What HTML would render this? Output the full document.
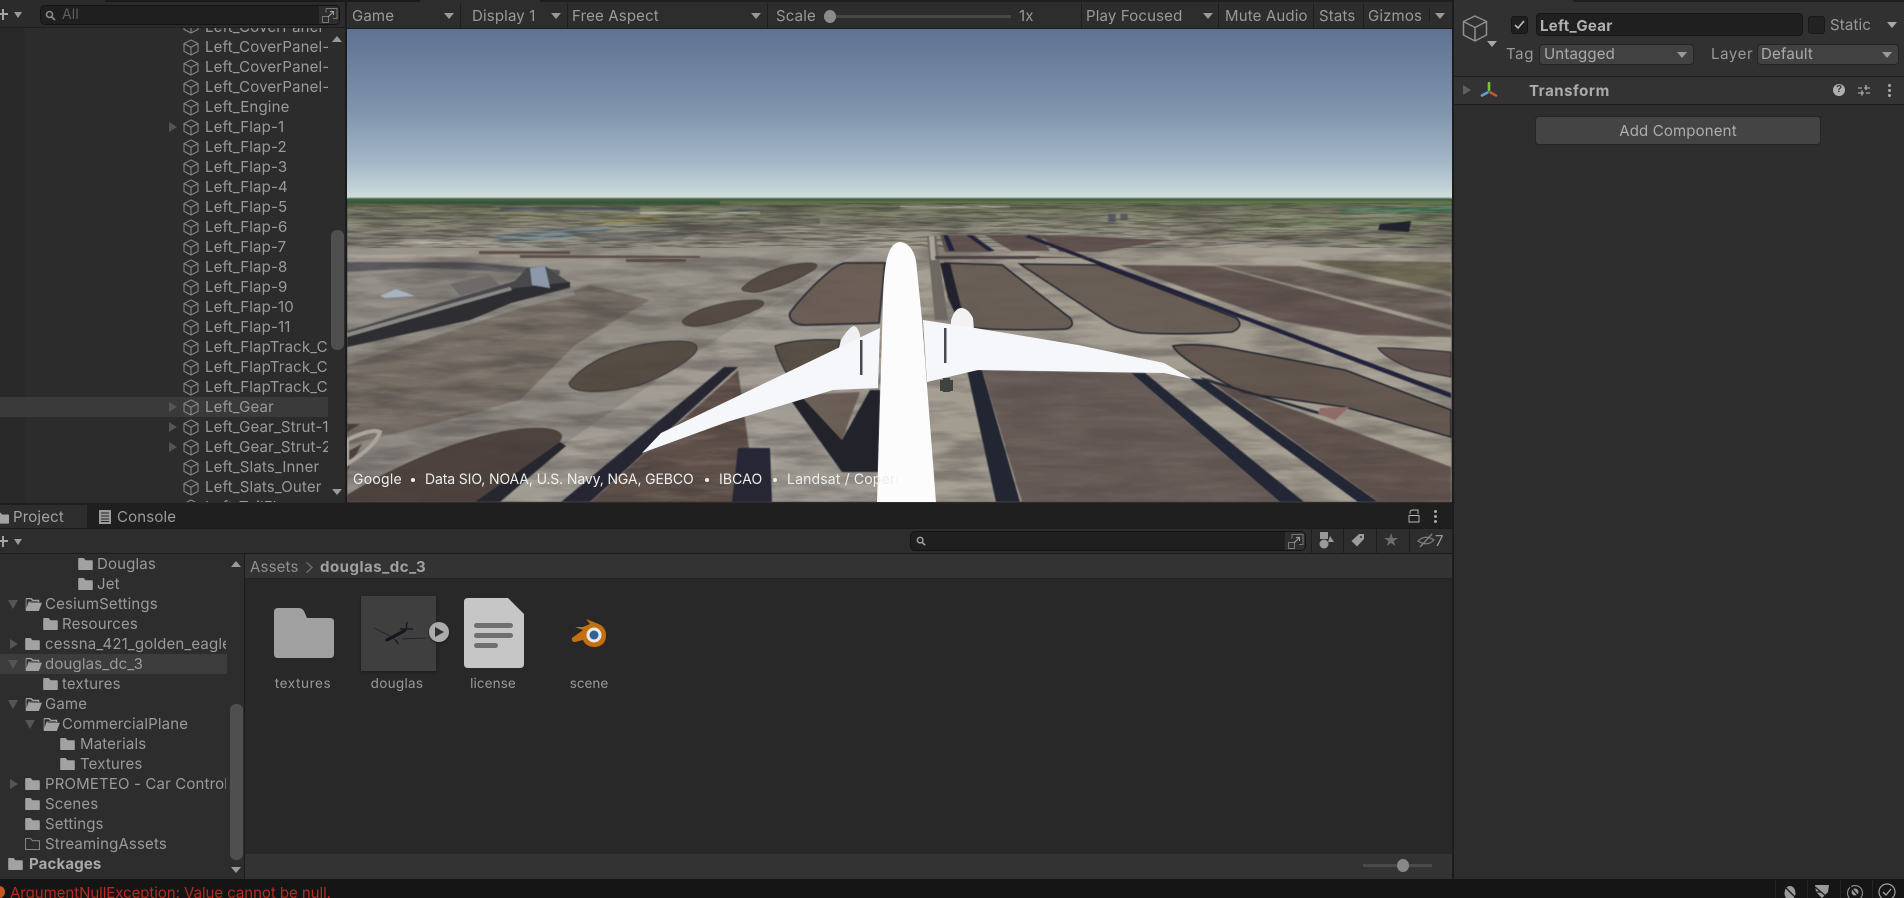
<!DOCTYPE html>
<html><head><meta charset="utf-8"><title>Unity</title>
<style>
html,body{margin:0;padding:0;width:1904px;height:898px;overflow:hidden;background:#2d2d2d}
body{position:relative;font-family:"Inter","Liberation Sans",sans-serif;font-size:15px;color:#9a9a9a;letter-spacing:.15px}
div,span,svg{position:absolute}
.t{white-space:nowrap;line-height:20px;height:20px}
.b{font-weight:bold}
.v{width:1px;background:#1e1e1e;top:3px;height:25px}
.ar{width:0;height:0;border-left:5px solid transparent;border-right:5px solid transparent;border-top:6px solid #9a9a9a}
.au{width:0;height:0;border-left:5px solid transparent;border-right:5px solid transparent;border-bottom:6px solid #9a9a9a}
.rt{width:0;height:0;border-top:5px solid transparent;border-bottom:5px solid transparent;border-left:8px solid #555}
.dn{width:0;height:0;border-left:5.5px solid transparent;border-right:5.5px solid transparent;border-top:9px solid #555}
.lb{font-size:13.5px;letter-spacing:.6px;text-align:center;width:90px;line-height:18px;color:#9a9a9a}
.ic{width:16px;height:17px;overflow:visible}
</style></head><body>
<svg width="0" height="0" style="position:absolute">
<defs>
<symbol id="c" viewBox="0 0 16 17"><path d="M8 1 L15 4.6 V12.4 L8 16 L1 12.4 V4.6 Z M1 4.6 L8 8.2 L15 4.6 M8 8.2 V16" fill="none" stroke="#858585" stroke-width="1.1" stroke-linejoin="round"/></symbol>
<symbol id="f" viewBox="0 0 16 13"><path d="M1 0 H6 L8 2.5 H15 Q16 2.5 16 3.5 V12 Q16 13 15 13 H1 Q0 13 0 12 V1 Q0 0 1 0 Z" fill="#a2a2a2"/></symbol>
<symbol id="o" viewBox="0 0 17 13"><path d="M1 0 H6 L8 2 H14 V4 H4.5 L1.5 11 M4.5 5 H16.5 L13.5 13 H1 L1 1 Z" fill="#a2a2a2" stroke="#a2a2a2" stroke-width=".6"/><path d="M1.5 1.2 V10 L3.6 3.6 H13 V3 H7.5 L5.5 1.2 Z" fill="#2d2d2d"/></symbol>
<filter id="bl"><feGaussianBlur stdDeviation="0.9"/></filter>
<filter id="bl2"><feGaussianBlur stdDeviation="0.6"/></filter>
<filter id="nz" x="0" y="0" width="100%" height="100%" color-interpolation-filters="sRGB"><feTurbulence type="fractalNoise" baseFrequency="0.012 0.07" numOctaves="4" seed="4"/><feColorMatrix values="0 0 0 0 .22  0 0 0 0 .2  0 0 0 0 .2  3.2 0 0 0 -1.3"/></filter>
<filter id="nz2" x="0" y="0" width="100%" height="100%" color-interpolation-filters="sRGB"><feTurbulence type="fractalNoise" baseFrequency="0.02 0.12" numOctaves="4" seed="11"/><feColorMatrix values="0 0 0 0 .85  0 0 0 0 .83  0 0 0 0 .8  3.2 0 0 0 -1.5"/></filter>
<filter id="nz3" x="0" y="0" width="100%" height="100%" color-interpolation-filters="sRGB"><feTurbulence type="fractalNoise" baseFrequency="0.03 0.4" numOctaves="3" seed="7"/><feColorMatrix values="0 0 0 0 .24  0 0 0 0 .26  0 0 0 0 .2  4 0 0 0 -1.7"/></filter>
<linearGradient id="sky" x1="0" y1="0" x2="0" y2="1"><stop offset="0" stop-color="#5e7292"/><stop offset=".5" stop-color="#8096ae"/><stop offset=".8" stop-color="#a5b9c8"/><stop offset="1" stop-color="#d2dedd"/></linearGradient>
<linearGradient id="gr" x1="0" y1="0" x2="0" y2="1"><stop offset="0" stop-color="#4e6a42"/><stop offset=".025" stop-color="#6e7258"/><stop offset=".06" stop-color="#878672"/><stop offset=".13" stop-color="#99948a"/><stop offset=".35" stop-color="#928d84"/><stop offset="1" stop-color="#8a8580"/></linearGradient>
</defs></svg>

<!-- hierarchy -->
<div style="left:0;top:0;width:346px;height:503px;background:#2c2c2c"></div>
<div style="left:0;top:0;width:346px;height:28px;background:#2b2b2b;border-bottom:1px solid #1e1e1e;box-sizing:border-box"></div>
<div style="left:105px;top:0;width:241px;height:2px;background:#1a1a1a"></div>
<div style="left:0;top:13px;width:8px;height:2px;background:#a4a4a4"></div><div style="left:2px;top:9px;width:2px;height:11px;background:#a4a4a4"></div>
<div class="ar" style="left:14px;top:12px;border-left-width:4.5px;border-right-width:4.5px"></div>
<div style="left:40px;top:5px;width:300px;height:20px;background:#1f1f1f;border:1px solid #131313;border-radius:5px;box-sizing:border-box"></div>
<svg style="left:45px;top:10px" width="12" height="12" viewBox="0 0 12 12"><circle cx="4.5" cy="4.5" r="3" fill="none" stroke="#8a8a8a" stroke-width="1.6"/><path d="M6.5 7 L10 10" stroke="#8a8a8a" stroke-width="1.8"/></svg>
<span class="t" style="left:62px;top:5px;color:#5f5f5f;font-size:14px">All</span>
<div style="left:319px;top:6px;width:20px;height:18px;background:#2e2e2e;border-radius:0 4px 4px 0"></div>
<svg style="left:322px;top:7px" width="16" height="16" viewBox="0 0 16 16"><path d="M4 1.5H15V11.5H11M4 1.5V5.5" fill="none" stroke="#777" stroke-width="1"/><rect x=".5" y="9.5" width="6" height="6" fill="none" stroke="#777"/><path d="M6 10 L11.5 4.5 M8 4.5H11.5V8" fill="none" stroke="#999" stroke-width="1.2"/></svg>
<div style="left:0;top:28px;width:25px;height:475px;background:#292929"></div>
<div style="left:0;top:397px;width:328px;height:20px;background:#3a3a3a"></div>
<div style="left:0;top:28px;width:328px;height:474px;overflow:hidden">
<svg class="ic" style="left:183px;top:-11px" ><use href="#c"/></svg><span class="t" style="left:205px;top:-11px">Left_CoverPanel-1</span>
<svg class="ic" style="left:183px;top:11px"><use href="#c"/></svg><span class="t" style="left:205px;top:9px">Left_CoverPanel-2</span>
<svg class="ic" style="left:183px;top:31px"><use href="#c"/></svg><span class="t" style="left:205px;top:29px">Left_CoverPanel-3</span>
<svg class="ic" style="left:183px;top:51px"><use href="#c"/></svg><span class="t" style="left:205px;top:49px">Left_CoverPanel-4</span>
<svg class="ic" style="left:183px;top:71px"><use href="#c"/></svg><span class="t" style="left:205px;top:69px">Left_Engine</span>
<div class="rt" style="left:169px;top:94px"></div><svg class="ic" style="left:183px;top:91px"><use href="#c"/></svg><span class="t" style="left:205px;top:89px">Left_Flap-1</span>
<svg class="ic" style="left:183px;top:111px"><use href="#c"/></svg><span class="t" style="left:205px;top:109px">Left_Flap-2</span>
<svg class="ic" style="left:183px;top:131px"><use href="#c"/></svg><span class="t" style="left:205px;top:129px">Left_Flap-3</span>
<svg class="ic" style="left:183px;top:151px"><use href="#c"/></svg><span class="t" style="left:205px;top:149px">Left_Flap-4</span>
<svg class="ic" style="left:183px;top:171px"><use href="#c"/></svg><span class="t" style="left:205px;top:169px">Left_Flap-5</span>
<svg class="ic" style="left:183px;top:191px"><use href="#c"/></svg><span class="t" style="left:205px;top:189px">Left_Flap-6</span>
<svg class="ic" style="left:183px;top:211px"><use href="#c"/></svg><span class="t" style="left:205px;top:209px">Left_Flap-7</span>
<svg class="ic" style="left:183px;top:231px"><use href="#c"/></svg><span class="t" style="left:205px;top:229px">Left_Flap-8</span>
<svg class="ic" style="left:183px;top:251px"><use href="#c"/></svg><span class="t" style="left:205px;top:249px">Left_Flap-9</span>
<svg class="ic" style="left:183px;top:271px"><use href="#c"/></svg><span class="t" style="left:205px;top:269px">Left_Flap-10</span>
<svg class="ic" style="left:183px;top:291px"><use href="#c"/></svg><span class="t" style="left:205px;top:289px">Left_Flap-11</span>
<svg class="ic" style="left:183px;top:311px"><use href="#c"/></svg><span class="t" style="left:205px;top:309px">Left_FlapTrack_Cover</span>
<svg class="ic" style="left:183px;top:331px"><use href="#c"/></svg><span class="t" style="left:205px;top:329px">Left_FlapTrack_Cover</span>
<svg class="ic" style="left:183px;top:351px"><use href="#c"/></svg><span class="t" style="left:205px;top:349px">Left_FlapTrack_Cover</span>
<div class="rt" style="left:169px;top:374px"></div><svg class="ic" style="left:183px;top:371px"><use href="#c"/></svg><span class="t" style="left:205px;top:369px">Left_Gear</span>
<div class="rt" style="left:169px;top:394px"></div><svg class="ic" style="left:183px;top:391px"><use href="#c"/></svg><span class="t" style="left:205px;top:389px">Left_Gear_Strut-1</span>
<div class="rt" style="left:169px;top:414px"></div><svg class="ic" style="left:183px;top:411px"><use href="#c"/></svg><span class="t" style="left:205px;top:409px">Left_Gear_Strut-2</span>
<svg class="ic" style="left:183px;top:431px"><use href="#c"/></svg><span class="t" style="left:205px;top:429px">Left_Slats_Inner</span>
<svg class="ic" style="left:183px;top:451px"><use href="#c"/></svg><span class="t" style="left:205px;top:449px">Left_Slats_Outer</span>
<svg class="ic" style="left:183px;top:471px"><use href="#c"/></svg><span class="t" style="left:205px;top:469px">Left_TailFlap</span>
</div>
<div class="au" style="left:332px;top:36px"></div>
<div class="ar" style="left:332px;top:489px"></div>
<div style="left:331px;top:230px;width:13px;height:120px;background:#4f4f4f;border-radius:6px"></div>
<div style="left:345px;top:0;width:2px;height:503px;background:#1c1c1c"></div>

<!-- game toolbar -->
<div style="left:347px;top:0;width:1106px;height:29px;background:#2d2d2d;border-bottom:1px solid #1c1c1c;box-sizing:border-box"></div>
<div style="left:347px;top:0;width:73px;height:2px;background:#1a1a1a"></div>
<div style="left:540px;top:0;width:913px;height:2px;background:#1f1f1f"></div>
<span class="t" style="left:352px;top:6px">Game</span><div class="ar" style="left:444px;top:13px"></div>
<div class="v" style="left:460px"></div>
<span class="t" style="left:472px;top:6px">Display 1</span><div class="ar" style="left:551px;top:13px"></div>
<div class="v" style="left:567px"></div>
<span class="t" style="left:572px;top:6px">Free Aspect</span><div class="ar" style="left:751px;top:13px"></div>
<div class="v" style="left:767px"></div>
<span class="t" style="left:776px;top:6px">Scale</span>
<div style="left:829px;top:15px;width:182px;height:3px;background:#484848"></div>
<div style="left:824px;top:10px;width:12px;height:13px;background:#8b8b8b;border-radius:50%"></div>
<span class="t" style="left:1019px;top:6px">1x</span>
<div class="v" style="left:1081px"></div>
<span class="t" style="left:1086px;top:6px">Play Focused</span><div class="ar" style="left:1203px;top:13px"></div>
<div class="v" style="left:1218px"></div>
<span class="t" style="left:1225px;top:6px">Mute Audio</span>
<div class="v" style="left:1313px"></div>
<span class="t" style="left:1319px;top:6px">Stats</span>
<div class="v" style="left:1363px"></div>
<span class="t" style="left:1368px;top:6px">Gizmos</span>
<div class="v" style="left:1429px;top:8px;height:14px"></div>
<div class="ar" style="left:1435px;top:13px"></div>

<!-- game view -->
<svg style="left:347px;top:29px" width="1105" height="473" viewBox="347 29 1105 473">
<rect x="347" y="29" width="1105" height="170" fill="url(#sky)"/>
<g filter="url(#bl)">
<rect x="347" y="198" width="1105" height="304" fill="url(#gr)"/>
<path d="M880 236 L1451 250 V502 H880Z" fill="#a39d91"/>
<rect x="347" y="198" width="1105" height="3" fill="#44603f"/>
<path d="M347 201 H720 V205 H500 L347 204Z" fill="#37553a"/>
<path d="M1130 201 H1452 V204 H1130Z" fill="#60744f"/>
<path d="M1340 209 L1451 206 V213 L1340 213Z" fill="#4f7f5e"/>
<path d="M500 207 H640 V210 H500Z M740 209 L800 212 H720Z" fill="#4c5160"/>
<path d="M600 218 L650 216 L670 221 L600 224Z" fill="#b1a35f" opacity=".6"/>
<path d="M640 212 H760 V214 H640Z M900 206 H1010 V208 H900Z" fill="#c6c1b0" opacity=".8"/>
<path d="M1120 214 H1128 V220 H1120Z M1108 214 H1116 V222 H1108Z" fill="#4b4f60"/>
<path d="M350 214 H500 V216 H350Z M620 226 L720 224 L820 218 V224 L720 232Z" fill="#5a5a52" opacity=".7"/>
<path d="M1170 230 H1451 V246 L1300 240 L1170 236Z" fill="#7e7d66" opacity=".7"/>
<path d="M1220 220 L1451 216 V224 L1240 228Z" fill="#6d7a58" opacity=".7"/>
<path d="M480 502 L650 385 L700 350 L770 305 L880 240 L880 502Z" fill="#a8a39a" opacity=".7"/>
<path d="M347 365 L590 285 L650 300 L575 345 L520 400 L430 425 L347 445Z" fill="#6f665e" opacity=".8"/>
<path d="M347 265 L426 262 L569 278 L575 295 L470 320 L347 345Z" fill="#8d8982"/>
<path d="M347 262 H470 L560 270 V275 L430 268 L347 272Z" fill="#57545a"/>
<path d="M347 255 H520 V257 L347 258Z M360 240 H500 L470 244 H360Z" fill="#b6b1a2" opacity=".6"/>
<path d="M494 235 C520 231 570 228 619 227 L569 238 C540 241 510 242 500 241Z" fill="#7c8a92"/>
<path d="M560 232 H700 L680 240 H590Z" fill="#5c5c5e" opacity=".6"/>
<path d="M400 240 C440 236 480 236 495 238 L490 243 L400 244Z" fill="#b9b4a8" opacity=".7"/>
<path d="M742 400 L749 447 L772 447 L782 502 H770Z" fill="#a39e94"/>
<path d="M1145 373 L1192 380 L1360 502 L1304 502Z" fill="#a39d90"/>
<path d="M1320 410 L1451 467 L1451 437 L1349 407Z" fill="#a39d90"/>
<path d="M590 502 L738 370 L742 397 L749 447 L770 502Z" fill="#5f5048"/>
<path d="M982 370 L1131 373 L1280 502 L1022 502Z" fill="#6b5e5a"/>
<path d="M1206 378 L1316 418 L1451 467 L1451 502 L1378 502Z" fill="#63564f"/>
<path d="M1120 265 L1214 266 L1451 330 L1451 337 L1360 335 L1276 320Z" fill="#655853"/>
<path d="M1214 265 L1300 266 L1451 296 L1451 325Z" fill="#6a5e58"/>
<path d="M1300 260 L1451 262 L1451 292Z" fill="#6e6a54"/>
</g>
<rect x="347" y="203" width="1105" height="45" filter="url(#nz3)" opacity=".5"/>
<rect x="347" y="205" width="1105" height="297" filter="url(#nz)" opacity=".34"/>
<rect x="347" y="205" width="1105" height="297" filter="url(#nz2)" opacity=".12"/>
<g filter="url(#bl2)">
<path d="M479 251 H570 V254 H479Z M626 259 H686 V262 H626Z M520 255 L700 256 V258 L520 258Z" fill="#54463f" opacity=".85"/>
<path d="M347 331 L430 306 L515 281 L527 268 L545 266 L570 283 L570 288 L511 303 L470 320 L347 347Z" fill="#4a484b"/>
<path d="M347 335 L515 288 L570 282 L570 287 L511 303 L470 320 L347 347Z" fill="#2e2e33"/>
<path d="M347 333 L510 287 L512 290 L347 337Z" fill="#8b8a88"/>
<path d="M530 268 L545 266 L550 288 L532 285Z" fill="#8d98ab"/>
<path d="M380 296 L396 289 L415 296 L385 298Z" fill="#a8b2c0"/>
<path d="M450 284 L490 275 L500 285 L460 296Z" fill="#6e6b6b"/>
<g fill-opacity=".88">
<path d="M569 383 C585 362 620 346 660 342 C680 340 697 341 697 348 C697 358 660 378 640 385 C610 393 570 395 569 383Z" fill="#4f433b" stroke="#35343a" stroke-width="1"/>
<path d="M683 320 C695 308 730 300 755 300 C768 300 765 306 755 310 C735 320 700 328 690 326 C684 325 681 323 683 320Z" fill="#4f423b" stroke="#3c3a3c" stroke-width=".8"/>
<path d="M742 288 C755 275 785 263 810 263 C820 263 818 268 810 272 C790 284 760 294 750 292 C743 291 741 290 742 288Z" fill="#4f423b" stroke="#3c3a3c" stroke-width=".8"/>
<path d="M790 313 C795 305 830 265 845 263 L885 263 L879 323 L805 325 C795 325 788 320 790 313Z" fill="#64574f" stroke="#2a2c36" stroke-width="1.8"/>
<path d="M775 346 C790 340 820 339 840 340 L838 350 L800 395 C790 380 778 360 775 346Z" fill="#4f453c" stroke="#2c2d33" stroke-width="1.2"/>
<path d="M347 495 C420 450 500 425 545 428 C565 430 566 438 555 446 L476 502 H347Z" fill="#443834"/>
<path d="M347 424 H360 L347 432Z M347 452 L362 444 L347 470Z" fill="#433833"/>
<path d="M945 263 L1002 265 L1070 318 Q1076 326 1066 329 Q1010 331 976 328 Q962 326 956 313Z" fill="#62554f" stroke="#20242f" stroke-width="1.6"/>
<path d="M1020 264 L1098 265 L1236 318 Q1245 326 1232 332 Q1190 335 1142 333 Q1118 330 1105 320Z" fill="#62554f" stroke="#20242f" stroke-width="1.6"/>
<path d="M940 235 H975 L992 252 H945Z M985 235 H1040 L1050 251 H1012Z M1040 235 L1170 240 L1100 252 H1060Z" fill="#584a47"/>
<path d="M1173 346 Q1190 343 1222 347 L1345 370 L1451 410 L1451 437 L1345 407 L1244 393 Q1180 360 1173 346Z" fill="#5a4e48" stroke="#20242f" stroke-width="1.6"/>
<path d="M1378 348 Q1390 347 1451 352 L1451 377 L1414 370 Q1385 358 1378 348Z" fill="#544844" stroke="#22252f"/>
<path d="M982 370 L1131 373 L1280 502 L1022 502Z" fill="#625551" fill-opacity=".5"/>
<path d="M1206 378 L1316 418 L1451 467 L1451 502 L1378 502Z" fill="#5c4f49" fill-opacity=".5"/>
<path d="M1120 265 L1214 266 L1451 330 L1451 337 L1360 335 L1276 320Z" fill="#5c4f4a" fill-opacity=".5"/>
<path d="M800 395 L860 392 L842 440Z" fill="#64564e"/>
</g>
<path d="M347 440 Q372 428 380 432 Q376 446 347 464Z" fill="none" stroke="#aaa69e" stroke-width="4"/>
<path d="M475 502 L560 442 L566 446 L500 502Z" fill="#25262d"/>
<path d="M561 502 L724 367 L738 367 L590 502Z" fill="#272830"/>
<path d="M738 448 L770 448 L772 502 L732 502Z" fill="#262835"/>
<path d="M782 388 L800 395 L842 440 L870 390 L880 390 L878 472 L842 472Z" fill="#22242c"/>
<path d="M927 236 L936 236 L948 320 L935 320Z" fill="#6d6862"/>
<path d="M929 236 L934 236 L936 260 L931 260Z" fill="#a9a49a"/>
<path d="M940 263 L950 263 L962 310 L973 328 L958 320 L948 298Z" fill="#20232d"/>
<path d="M1029 235 L1451 393 L1451 398 L1025 237Z" fill="#20243a"/>
<path d="M935 256 H1040 L1035 259 H935Z M1000 256 L1120 258 H1000Z" fill="#4a413f"/>
<path d="M943 235 L948 235 L955 251 H949Z M966 235 L972 235 L995 251 H988Z" fill="#20233a"/>
<path d="M967 370 L996 502 L1020 502 L982 370Z" fill="#232633"/>
<path d="M1131 373 L1145 373 L1304 502 L1280 502Z" fill="#212534"/>
<path d="M1189 378 L1206 380 L1378 502 L1358 502Z" fill="#212534"/>
<path d="M1200 377 L1320 412 L1324 416 L1205 381Z" fill="#252938"/>
<path d="M1320 408 L1349 407 L1335 420 L1318 414Z" fill="#8f6c68"/>
<path d="M1380 224 L1411 221 L1409 232 L1378 230Z" fill="#22222e"/>
</g>
<!-- plane -->
<path d="M854 326 Q849 327 841 340 L838 352 H862 L860 335 Q858 327 854 326Z" fill="#f0f0f2"/>
<path d="M961 308 Q955 308 951 320 L951 330 H974 L973 318 Q968 308 961 308Z" fill="#f2f2f4"/>
<path d="M642 453 L661 433 L838 348 L880 328 L878 388 L833 390 L727 422Z" fill="#f6f7fa"/>
<path d="M923 320 L975 328 L1078 345 L1164 363 L1192 379 L1164 373 L978 370 L927 382Z" fill="#f6f7fa"/>
<rect x="860" y="340" width="2.5" height="35" fill="#4a4a4c"/>
<rect x="944" y="328" width="2.5" height="35" fill="#4a4a4c"/>
<path d="M940 380 H953 V391 H940Z M943 378 H950 V392 H943Z" fill="#3d4440"/>
<path d="M900 242 C888 243 884 262 883 300 L877 502 H936 L922 320 L917 270 C916 252 910 243 900 242Z" fill="#fcfcfd"/>
</svg>
<span class="t" style="left:353px;top:470px;color:#eee;font-size:14px;letter-spacing:.25px">Google</span>
<span style="left:411px;top:478px;width:4px;height:4px;border-radius:50%;background:#eee"></span>
<span class="t" style="left:425px;top:470px;color:#eee;font-size:14px;letter-spacing:-.12px">Data SIO, NOAA, U.S. Navy, NGA, GEBCO</span>
<span style="left:705px;top:478px;width:4px;height:4px;border-radius:50%;background:#eee"></span>
<span class="t" style="left:719px;top:470px;color:#eee;font-size:14px;letter-spacing:.1px">IBCAO</span>
<span style="left:773px;top:478px;width:4px;height:4px;border-radius:50%;background:#eee"></span>
<div style="left:787px;top:470px;width:110px;height:20px;overflow:hidden"><span class="t" style="left:0;top:0;color:#eee;font-size:14px;letter-spacing:.15px">Landsat / Copernicus</span></div>
<div style="left:1452px;top:0;width:2px;height:880px;background:#1c1c1c"></div>

<!-- inspector -->
<div style="left:1454px;top:0;width:450px;height:880px;background:#2d2d2d"></div>
<div style="left:1454px;top:0;width:450px;height:76px;background:#313131"></div>
<div style="left:1573px;top:0;width:331px;height:2px;background:#1f1f1f"></div>
<svg style="left:1462px;top:15px" width="26" height="27" viewBox="0 0 26 27"><path d="M13 1 L24.5 6.5 V20 L13 26 L1.5 20 V6.5 Z M1.5 6.5 L13 12.5 L24.5 6.5 M13 12.5 V26" fill="none" stroke="#8f8f8f" stroke-width="1.5" stroke-linejoin="round"/></svg>
<div class="ar" style="left:1487px;top:41px;border-top-color:#a8a8a8"></div>
<div style="left:1511px;top:16px;width:17px;height:18px;background:#1f1f1f;border:1px solid #161616;box-sizing:border-box;border-radius:3px"></div>
<svg style="left:1513px;top:18px" width="13" height="13" viewBox="0 0 13 13"><path d="M2 7 L5 10 L11 3" fill="none" stroke="#c4c4c4" stroke-width="1.5"/></svg>
<div style="left:1536px;top:13px;width:267px;height:23px;background:#1f1f1f;border:1px solid #161616;box-sizing:border-box;border-radius:4px"></div>
<span class="t b" style="left:1540px;top:16px;color:#b0b0b0;font-size:15px;letter-spacing:.3px">Left_Gear</span>
<div style="left:1808px;top:16px;width:17px;height:18px;background:#222;border:1px solid #191919;box-sizing:border-box;border-radius:3px"></div>
<span class="t" style="left:1830px;top:15px">Static</span>
<div class="ar" style="left:1887px;top:22px;border-top-color:#a8a8a8"></div>
<span class="t" style="left:1506px;top:44px;letter-spacing:.6px">Tag</span>
<div style="left:1539px;top:44px;width:155px;height:21px;background:#414141;border:1px solid #242424;box-sizing:border-box;border-radius:4px"></div>
<span class="t" style="left:1544px;top:44px;color:#ababab">Untagged</span><div class="ar" style="left:1677px;top:52px"></div>
<span class="t" style="left:1711px;top:44px;letter-spacing:.6px">Layer</span>
<div style="left:1757px;top:44px;width:142px;height:21px;background:#414141;border:1px solid #242424;box-sizing:border-box;border-radius:4px"></div>
<span class="t" style="left:1761px;top:44px;color:#ababab">Default</span><div class="ar" style="left:1882px;top:52px"></div>
<div style="left:1454px;top:76px;width:450px;height:1px;background:#1d1d1d"></div>
<div style="left:1454px;top:77px;width:450px;height:27px;background:#333"></div>
<div style="left:1454px;top:104px;width:450px;height:1px;background:#1d1d1d"></div>
<div class="rt" style="left:1463px;top:85px;border-left-color:#5e5e5e;border-top-width:5px;border-bottom-width:5px"></div>
<svg style="left:1480px;top:82px" width="18" height="16" viewBox="0 0 18 16"><path d="M9 1 V8" stroke="#7fc043" stroke-width="2.6" stroke-linecap="round"/><path d="M7.5 10.5 L2 13.5" stroke="#57a6d6" stroke-width="2.6" stroke-linecap="round"/><path d="M10.5 10.5 L16 13.5" stroke="#c9562c" stroke-width="2.6" stroke-linecap="round"/></svg>
<span class="t b" style="left:1529px;top:81px;color:#ababab;letter-spacing:.5px">Transform</span>
<div style="left:1833px;top:84px;width:12px;height:12px;border-radius:50%;background:#b0b0b0;color:#333;font:bold 10px/12px 'Liberation Sans';text-align:center;letter-spacing:0">?</div>
<svg style="left:1857px;top:83px" width="14" height="14" viewBox="0 0 14 14"><path d="M7 5H13M1 5H5M9 10H13M1 10H7" stroke="#a0a0a0" stroke-width="1.2"/><path d="M9 2V7M5 7.5V12.5" stroke="#a0a0a0" stroke-width="1.6"/></svg>
<div style="left:1887.5px;top:84px;width:3px;height:3px;border-radius:50%;background:#aaa"></div><div style="left:1887.5px;top:89px;width:3px;height:3px;border-radius:50%;background:#aaa"></div><div style="left:1887.5px;top:94px;width:3px;height:3px;border-radius:50%;background:#aaa"></div>
<div style="left:1535px;top:116px;width:286px;height:29px;background:#444;border:1px solid #252525;box-sizing:border-box;border-radius:4px;text-align:center;line-height:27px;color:#adadad">Add Component</div>

<!-- project panel -->
<div style="left:0;top:503px;width:1452px;height:26px;background:#1f1f1f"></div>
<div style="left:0;top:505px;width:87px;height:24px;background:#2d2d2d"></div>
<svg style="left:-5px;top:512px" width="14" height="12" viewBox="0 0 16 13"><use href="#f"/></svg>
<span class="t" style="left:13px;top:507px;color:#a2a2a2">Project</span>
<svg style="left:99px;top:510px" width="12" height="14" viewBox="0 0 12 14"><path d="M0 0H12V14H0Z" fill="#9b9b9b"/><path d="M2 3H10M2 6H10M2 9H10M2 11.5H10" stroke="#222" stroke-width="1"/></svg>
<span class="t" style="left:117px;top:507px">Console</span>
<svg style="left:1408px;top:509px" width="12" height="14" viewBox="0 0 12 14"><path d="M2 5V3Q2 1 5 1H10V5M1 6.5H11V13H1Z" fill="none" stroke="#bbb" stroke-width=".9"/></svg>
<div style="left:1433.5px;top:510px;width:3px;height:3px;border-radius:50%;background:#a8a8a8"></div><div style="left:1433.5px;top:515px;width:3px;height:3px;border-radius:50%;background:#a8a8a8"></div><div style="left:1433.5px;top:520px;width:3px;height:3px;border-radius:50%;background:#a8a8a8"></div>
<div style="left:0;top:528px;width:1452px;height:26px;background:#2d2d2d;border-top:1px solid #1c1c1c;border-bottom:1px solid #1c1c1c;box-sizing:border-box"></div>
<div style="left:0;top:540px;width:8px;height:2px;background:#a4a4a4"></div><div style="left:2px;top:536px;width:2px;height:11px;background:#a4a4a4"></div>
<div class="ar" style="left:14px;top:539px;border-left-width:4.5px;border-right-width:4.5px"></div>
<div style="left:910px;top:531px;width:396px;height:20px;background:#1f1f1f;border:1px solid #131313;box-sizing:border-box;border-radius:5px"></div>
<svg style="left:916px;top:536px" width="11" height="11" viewBox="0 0 12 12"><circle cx="4.5" cy="4.5" r="3" fill="none" stroke="#a0a0a0" stroke-width="1.6"/><path d="M6.5 7 L10 10" stroke="#a0a0a0" stroke-width="1.8"/></svg>
<div style="left:1285px;top:532px;width:20px;height:18px;background:#2e2e2e;border-radius:0 4px 4px 0"></div>
<svg style="left:1288px;top:533px" width="16" height="16" viewBox="0 0 16 16"><path d="M4 1.5H15V11.5H11M4 1.5V5.5" fill="none" stroke="#777" stroke-width="1"/><rect x=".5" y="9.5" width="6" height="6" fill="none" stroke="#777"/><path d="M6 10 L11.5 4.5 M8 4.5H11.5V8" fill="none" stroke="#999" stroke-width="1.2"/></svg>
<div class="v" style="left:1311px;top:529px"></div><div class="v" style="left:1343px;top:529px"></div><div class="v" style="left:1376px;top:529px"></div><div class="v" style="left:1409px;top:529px"></div>
<svg style="left:1319px;top:532px" width="16" height="17" viewBox="0 0 16 17"><rect x="1" y="0" width="8" height="7" fill="#9a9a9a"/><circle cx="5" cy="12" r="4.5" fill="#9a9a9a"/><path d="M11 4 L15 10 H9Z" fill="#9a9a9a"/></svg>
<svg style="left:1350px;top:533px" width="15" height="15" viewBox="0 0 15 15"><path d="M9 1 H14 V6 L7 13.5 L1.5 8 Z" fill="#9c9c9c"/><circle cx="11" cy="4" r="1" fill="#2d2d2d"/></svg>
<div style="left:1383px;top:530px;font-size:18px;line-height:22px;color:#6c6c6c;letter-spacing:0;font-family:'DejaVu Sans'">★</div>
<svg style="left:1417px;top:533px" width="18" height="15" viewBox="0 0 18 15"><path d="M1 8 Q8 1 17 7 Q10 14 1 8Z" fill="none" stroke="#808080" stroke-width="1.2"/><path d="M3 14 L15 1" stroke="#808080" stroke-width="1.4"/></svg>
<span class="t" style="left:1435px;top:531px">7</span>

<!-- project tree -->
<div style="left:0;top:554px;width:244px;height:325px;background:#2d2d2d"></div>
<div style="left:0;top:654px;width:227px;height:20px;background:#3c3c3c"></div>
<svg style="left:78px;top:558px" width="15" height="12" viewBox="0 0 16 13"><use href="#f"/></svg><span class="t" style="left:97px;top:554px">Douglas</span>
<svg style="left:78px;top:578px" width="15" height="12" viewBox="0 0 16 13"><use href="#f"/></svg><span class="t" style="left:97px;top:574px">Jet</span>
<div class="dn" style="left:8px;top:600px"></div><svg style="left:25px;top:598px" width="17" height="13" viewBox="0 0 17 13"><use href="#o"/></svg><span class="t" style="left:45px;top:594px">CesiumSettings</span>
<svg style="left:43px;top:618px" width="15" height="12" viewBox="0 0 16 13"><use href="#f"/></svg><span class="t" style="left:62px;top:614px">Resources</span>
<div class="rt" style="left:10px;top:639px"></div><svg style="left:25px;top:638px" width="15" height="12" viewBox="0 0 16 13"><use href="#f"/></svg>
<div style="left:45px;top:634px;width:181px;height:20px;overflow:hidden"><span class="t" style="left:0;top:0">cessna_421_golden_eagle</span></div>
<div class="dn" style="left:8px;top:660px"></div><svg style="left:25px;top:658px" width="17" height="13" viewBox="0 0 17 13"><use href="#o"/></svg><span class="t" style="left:45px;top:654px">douglas_dc_3</span>
<svg style="left:43px;top:678px" width="15" height="12" viewBox="0 0 16 13"><use href="#f"/></svg><span class="t" style="left:62px;top:674px">textures</span>
<div class="dn" style="left:8px;top:700px"></div><svg style="left:25px;top:698px" width="17" height="13" viewBox="0 0 17 13"><use href="#o"/></svg><span class="t" style="left:45px;top:694px">Game</span>
<div class="dn" style="left:25px;top:720px"></div><svg style="left:43px;top:718px" width="17" height="13" viewBox="0 0 17 13"><use href="#o"/></svg><span class="t" style="left:62px;top:714px">CommercialPlane</span>
<svg style="left:60px;top:738px" width="15" height="12" viewBox="0 0 16 13"><use href="#f"/></svg><span class="t" style="left:80px;top:734px">Materials</span>
<svg style="left:60px;top:758px" width="15" height="12" viewBox="0 0 16 13"><use href="#f"/></svg><span class="t" style="left:80px;top:754px">Textures</span>
<div class="rt" style="left:10px;top:779px"></div><svg style="left:25px;top:778px" width="15" height="12" viewBox="0 0 16 13"><use href="#f"/></svg>
<div style="left:45px;top:774px;width:181px;height:20px;overflow:hidden"><span class="t" style="left:0;top:0">PROMETEO - Car Controller</span></div>
<svg style="left:25px;top:798px" width="15" height="12" viewBox="0 0 16 13"><use href="#f"/></svg><span class="t" style="left:45px;top:794px">Scenes</span>
<svg style="left:25px;top:818px" width="15" height="12" viewBox="0 0 16 13"><use href="#f"/></svg><span class="t" style="left:45px;top:814px">Settings</span>
<svg style="left:25px;top:838px" width="15" height="12" viewBox="0 0 16 13"><path d="M.5 12.5V.5H6L8 3H15.5V12.5Z" fill="none" stroke="#8e8e8e"/></svg><span class="t" style="left:45px;top:834px">StreamingAssets</span>
<svg style="left:8px;top:858px" width="15" height="12" viewBox="0 0 16 13"><use href="#f"/></svg><span class="t b" style="left:29px;top:854px;color:#a8a8a8">Packages</span>
<div class="au" style="left:231px;top:561px"></div>
<div class="ar" style="left:231px;top:867px"></div>
<div style="left:230px;top:704px;width:13px;height:156px;background:#4f4f4f;border-radius:6px"></div>
<div style="left:244px;top:554px;width:1px;height:325px;background:#1c1c1c"></div>

<!-- grid -->
<div style="left:245px;top:554px;width:1207px;height:325px;background:#282828"></div>
<div style="left:245px;top:554px;width:1207px;height:25px;background:#333;border-bottom:1px solid #232323;box-sizing:border-box"></div>
<span class="t" style="left:250px;top:557px;color:#8f8f8f">Assets</span>
<svg style="left:305px;top:561px" width="9" height="13" viewBox="0 0 9 13"><path d="M1.5 1.5 L7 6.5 L1.5 11.5" fill="none" stroke="#6e6e6e" stroke-width="1.4"/></svg>
<span class="t b" style="left:320px;top:557px;color:#a0a0a0;letter-spacing:.5px">douglas_dc_3</span>
<svg style="left:274px;top:608px" width="60" height="50" viewBox="0 0 60 50"><path d="M4 0 H25 Q28 0 30 3 L33 10 H56 Q60 10 60 14 V46 Q60 50 56 50 H4 Q0 50 0 46 V4 Q0 0 4 0Z" fill="#a0a0a0"/></svg>
<div class="lb" style="left:258px;top:675px">textures</div>
<div style="left:361px;top:596px;width:75px;height:75px;background:#3f3f3f;box-shadow:0 1px 2px #1c1c1c"></div>
<svg style="left:370px;top:615px" width="60" height="30" viewBox="370 615 60 30"><path d="M374 628 L392 637 L396 641" fill="none" stroke="#23252c" stroke-width="1"/><path d="M387 640 L404 631" stroke="#14161c" stroke-width="3.2" stroke-linecap="round"/><path d="M402 639 L426 638" stroke="#23252c" stroke-width="1"/><path d="M406 631 L407 622 M400 629 L413 629 M396 640 L398 644" stroke="#181a20" stroke-width="1.4"/></svg>
<div style="left:429px;top:622px;width:20px;height:20px;border-radius:50%;background:#ababab;box-shadow:0 1px 2px #1a1a1a"></div>
<svg style="left:434px;top:626px" width="12" height="12" viewBox="0 0 12 12"><path d="M1 1 L10 6 L1 11Z" fill="#2f2f2f"/></svg>
<div class="lb" style="left:352px;top:675px;letter-spacing:.3px">douglas</div>
<svg style="left:464px;top:598px" width="60" height="70" viewBox="0 0 60 70"><path d="M4 0 H44 L60 16 V66 Q60 70 56 70 H4 Q0 70 0 66 V4 Q0 0 4 0Z" fill="#c6c6c6"/><rect x="10" y="25" width="39" height="5" rx="2.5" fill="#6f6f6f"/><rect x="10" y="35" width="39" height="5" rx="2.5" fill="#6f6f6f"/><rect x="10" y="45" width="24" height="5" rx="2.5" fill="#6f6f6f"/></svg>
<div class="lb" style="left:448px;top:675px;letter-spacing:.1px">license</div>
<svg style="left:570px;top:618px" width="38" height="32" viewBox="0 0 38 32"><path d="M2 20 L13 12 L5 9 H13 L20 6 L16 1 L26 5 Q36 8 36 17 Q36 28 25 29 Q16 29 13 22 L5 24 Q1 24 2 20Z" fill="#c36f12"/><circle cx="24" cy="17" r="7.5" fill="#e8e8e8"/><circle cx="24" cy="17" r="4.5" fill="#2f6196"/></svg>
<div class="lb" style="left:544px;top:675px;letter-spacing:0">scene</div>
<div style="left:245px;top:854px;width:1207px;height:25px;background:#333"></div>
<div style="left:1363px;top:864px;width:69px;height:3px;background:#4a4a4a"></div>
<div style="left:1397px;top:859px;width:12px;height:13px;border-radius:50%;background:#888"></div>

<!-- status bar -->
<div style="left:0;top:879px;width:1904px;height:19px;background:#151515"></div>
<div style="left:-6px;top:886px;width:11px;height:12px;border-radius:50%;background:#c25a22"></div>
<span class="t" style="left:10px;top:883px;color:#b52a22;font-size:15px;letter-spacing:-.05px">ArgumentNullException: Value cannot be null.</span>
<div style="left:1775px;top:880px;width:1px;height:18px;background:#252525"></div><div style="left:1807px;top:880px;width:1px;height:18px;background:#252525"></div><div style="left:1840px;top:880px;width:1px;height:18px;background:#252525"></div><div style="left:1872px;top:880px;width:1px;height:18px;background:#252525"></div>
<svg style="left:1781px;top:885px" width="18" height="13" viewBox="0 0 18 13"><ellipse cx="9" cy="8" rx="5.5" ry="7" fill="#9a9a9a"/><path d="M3 1 L15 13 M2 6H4 M14 6H16" stroke="#1a1a1a" stroke-width="1.4"/></svg>
<svg style="left:1813px;top:885px" width="18" height="13" viewBox="0 0 18 13"><path d="M2 0 H16 L15 7 L9 13 L3 7Z" fill="#9a9a9a"/><path d="M2 2 L14 12 M1 7H8" stroke="#1a1a1a" stroke-width="1.3"/></svg>
<svg style="left:1846px;top:885px" width="18" height="13" viewBox="0 0 18 13"><circle cx="9" cy="8" r="7.5" fill="none" stroke="#888" stroke-width="1.2"/><circle cx="9" cy="7" r="3.5" fill="#9a9a9a"/><path d="M3 0 L14 13" stroke="#1a1a1a" stroke-width="1.4"/></svg>
<svg style="left:1878px;top:883px" width="18" height="15" viewBox="0 0 18 15"><circle cx="9" cy="9" r="8" fill="none" stroke="#a0a0a0" stroke-width="1.2"/><path d="M5 9 L8 12 L13 6" fill="none" stroke="#a0a0a0" stroke-width="1.3"/></svg>
</body></html>
